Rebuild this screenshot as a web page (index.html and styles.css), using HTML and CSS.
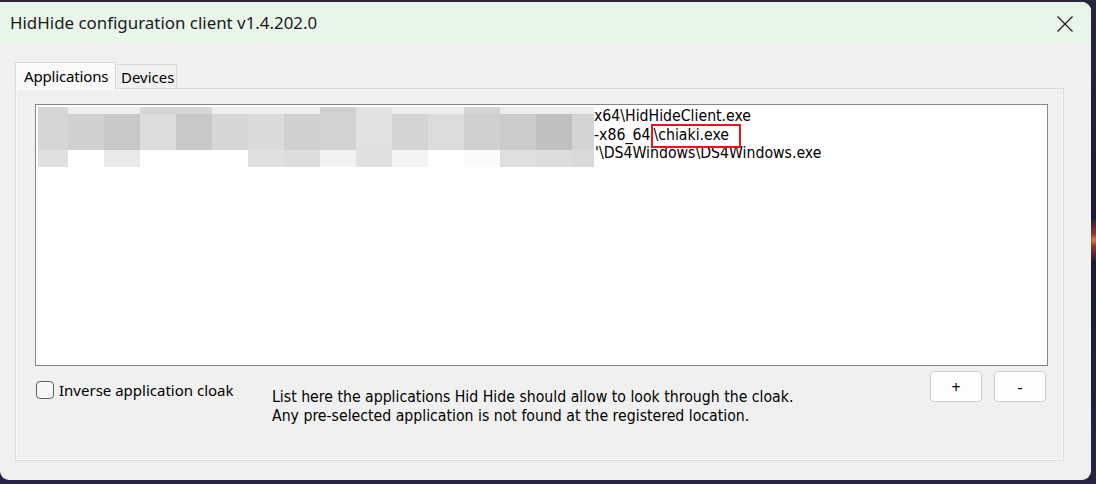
FILE: index.html
```html
<!DOCTYPE html>
<html>
<head>
<meta charset="utf-8">
<link rel="stylesheet" href="styles.css">
</head>
<body>
<div class="window">
  <div class="titlebar">
    <span class="title">HidHide configuration client v1.4.202.0</span>
    <span class="close">
      <svg width="16" height="16" viewBox="0 0 16 16"><path d="M0.5 0.5 L15.5 15.5 M15.5 0.5 L0.5 15.5" stroke="#1a1a1a" stroke-width="1.2" fill="none"/></svg>
    </span>
  </div>
  <div class="content">
    <div class="tabs">
      <div class="tab active">Applications</div>
      <div class="tab">Devices</div>
    </div>
    <div class="panel">
      <div class="listbox">
        <div class="line">x64\HidHideClient.exe</div>
        <div class="line">-x86_64<span class="hl">\chiaki.exe</span></div>
        <div class="line l3">'\DS4Windows\DS4Windows.exe</div>
        <div class="mosaic">
          <i class="s-d3"></i><i class="s-ee"></i><i class="s-ee"></i><i class="s-d4"></i><i class="s-d4"></i><i class="s-ee"></i><i class="s-ee"></i><i class="s-ee"></i><i class="s-d0"></i><i class="s-e1"></i><i class="s-ec"></i><i class="s-ec"></i><i class="s-d4"></i><i class="s-ec"></i><i class="s-ec"></i><i class="s-ec"></i>
          <i class="s-d6"></i><i class="s-d1"></i><i class="s-c9"></i><i class="s-dc"></i><i class="s-c9"></i><i class="s-d6"></i><i class="s-da"></i><i class="s-d1"></i><i class="s-d2"></i><i class="s-e1"></i><i class="s-d4"></i><i class="s-db"></i><i class="s-d0"></i><i class="s-cb"></i><i class="s-c0"></i><i class="s-d3"></i>
          <i class="s-df"></i><i class="s-ff"></i><i class="s-e9"></i><i class="s-ff"></i><i class="s-ff"></i><i class="s-ff"></i><i class="s-de"></i><i class="s-dc"></i><i class="s-f2"></i><i class="s-e0"></i><i class="s-f3"></i><i class="s-ff"></i><i class="s-fa"></i><i class="s-de"></i><i class="s-dc"></i><i class="s-d9"></i>
        </div>
      </div>
      <div class="bottom">
        <label class="check">
          <span class="box"></span>
          <span class="check-label">Inverse application cloak</span>
        </label>
        <div class="desc">
          <div>List here the applications Hid Hide should allow to look through the cloak.</div>
          <div>Any pre-selected application is not found at the registered location.</div>
        </div>
        <div class="buttons">
          <button class="btn">+</button>
          <button class="btn">-</button>
        </div>
      </div>
    </div>
  </div>
</div>
</body>
</html>
```
FILE: styles.css
```css
html, body {
  margin: 0;
  padding: 0;
}
body {
  width: 1096px;
  height: 484px;
  overflow: hidden;
  background:
    radial-gradient(circle at 1094px 240px, #e8803a 0, #8a3a2a 6px, rgba(40,20,50,0) 22px),
    linear-gradient(180deg, #2a2440 0%, #1c1a33 50%, #24244a 100%);
}
.window {
  margin-top: 2px;
  width: 1091px;
  height: 478px;
  background: #f0f0f0;
  border-radius: 0 9px 9px 9px;
  overflow: hidden;
  font-family: "Noto Sans", "Open Sans", sans-serif;
  color: #000;
}
.titlebar {
  height: 42px;
  background: #e8f6ea;
  display: flex;
  align-items: center;
  justify-content: space-between;
  padding: 0 18px 0 10px;
}
.title {
  font-size: 16.9px;
  color: #1a1a1a;
  margin-top: -1px;
}
.close {
  display: flex;
  width: 16px;
  height: 16px;
  margin-top: 1px;
}
.content {
  padding: 18px 27px 0 15px;
}
.tabs {
  display: flex;
  align-items: flex-end;
  height: 26px;
}
.tab {
  font-size: 15px;
  height: 24px;
  line-height: 24px;
  padding: 0 4px 0 5px;
  border: 1px solid #dadada;
  border-bottom: none;
  box-sizing: border-box;
  background: #f0f0f0;
}
.tab.active {
  width: 101px;
  height: 27px;
  padding-left: 8px;
  line-height: 27px;
  letter-spacing: -0.15px;
  background: #f9f9f9;
  position: relative;
  z-index: 1;
  margin-bottom: -1px;
  border-color: #dadada;
}
.tab:not(.active) {
  width: 61px;
  border-left: none;
}
.panel {
  box-sizing: border-box;
  height: 373px;
  border: 1px solid #dcdcdc;
  box-shadow: inset 0 0 0 1px #f8f8f8;
  padding: 15px 15px 0 19px;
}
.listbox {
  position: relative;
  box-sizing: border-box;
  width: 1013px;
  height: 262px;
  background: #fff;
  border: 1px solid #84868c;
  padding: 2px 0 0 558px;
  font-family: "DejaVu Sans Condensed", "DejaVu Sans", sans-serif;
  font-size: 15.7px;
  line-height: 18.5px;
  overflow: hidden;
}
.line {
  white-space: nowrap;
  height: 18.5px;
}
.line .pre {
  letter-spacing: 0.6px;
}
.l3 {
  padding-left: 1px;
}
.hl {
  position: relative;
  display: inline-block;
  line-height: 18.5px;
  margin-left: 3px;
}
.hl::after {
  content: "";
  position: absolute;
  left: -2px;
  top: -2px;
  width: 86px;
  height: 20px;
  border: 2px solid #e5141e;
}
.mosaic {
  position: absolute;
  left: 2px;
  top: 2px;
  display: grid;
  grid-template-columns: 30px repeat(14, 36px) 22px;
  grid-template-rows: 7px 36px 17px;
}
.mosaic i { display: block; }
.s-ff { background: #ffffff; }
.s-fa { background: #fafafa; }
.s-f3 { background: #f3f3f3; }
.s-f2 { background: #f2f2f2; }
.s-ee { background: #eeeeee; }
.s-ec { background: #ececec; }
.s-e9 { background: #e9e9e9; }
.s-e1 { background: #e1e1e1; }
.s-e0 { background: #e0e0e0; }
.s-df { background: #dfdfdf; }
.s-de { background: #dedfe0; }
.s-dc { background: #dcdcdc; }
.s-db { background: #dbdbd9; }
.s-da { background: #dadada; }
.s-d9 { background: #dad9d7; }
.s-d6 { background: #d6d6d6; }
.s-d4 { background: #d4d4d4; }
.s-d3 { background: #d3d4d6; }
.s-d2 { background: #d2d2d2; }
.s-d1 { background: #d1d0d0; }
.s-d0 { background: #d0d0d0; }
.s-cb { background: #cccaca; }
.s-c9 { background: #c9c8c8; }
.s-c0 { background: #c0c0c0; }
.bottom {
  display: flex;
  align-items: flex-start;
  margin-top: 5px;
  width: 1011px;
}
.check {
  display: flex;
  align-items: center;
  width: 236px;
  margin-top: 9px;
  margin-left: 1px;
}
.box {
  box-sizing: border-box;
  width: 18px;
  height: 18px;
  border: 1px solid #5f5f5f;
  border-radius: 4px;
  background: #f6f6f6;
  margin-right: 5px;
}
.check-label {
  font-size: 15px;
  line-height: 20px;
}
.desc {
  flex: 1;
  margin-top: 16px;
  font-family: "DejaVu Sans Condensed", "DejaVu Sans", sans-serif;
  font-size: 15.7px;
  line-height: 19px;
}
.buttons {
  display: flex;
  gap: 12px;
}
.btn {
  box-sizing: border-box;
  width: 52px;
  height: 31px;
  background: #fdfdfd;
  border: 1px solid #cfcfcf;
  border-radius: 4px;
  font-family: "Noto Sans", sans-serif;
  font-size: 16px;
  color: #000;
  padding: 0;
}
```
